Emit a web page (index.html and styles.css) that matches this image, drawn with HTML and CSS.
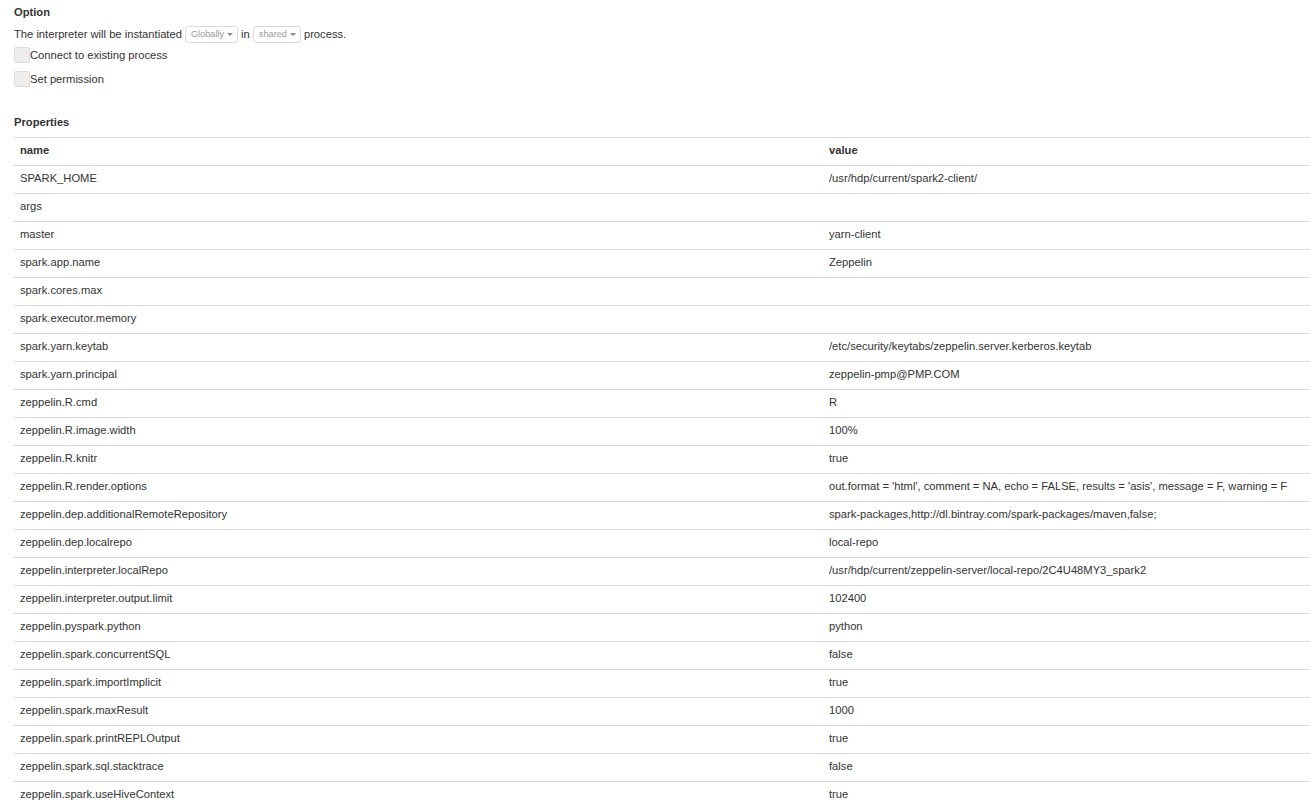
FILE: index.html
```html
<!DOCTYPE html>
<html>
<head>
<meta charset="utf-8">
<link rel="stylesheet" href="styles.css">
</head>
<body>
<div class="page">
  <div class="section-title">Option</div>
  <div class="inst-line">
    <span>The interpreter will be instantiated</span>
    <span class="dd">Globally<span class="caret"></span></span>
    <span>in</span>
    <span class="dd">shared<span class="caret"></span></span>
    <span>process.</span>
  </div>
  <div class="check-row first"><span class="cb"></span><span>Connect to existing process</span></div>
  <div class="check-row"><span class="cb"></span><span>Set permission</span></div>

  <div class="section-title props">Properties</div>
  <table class="props-table">
    <thead>
      <tr><th class="col-name">name</th><th>value</th></tr>
    </thead>
    <tbody>
      <tr><td>SPARK_HOME</td><td>/usr/hdp/current/spark2-client/</td></tr>
      <tr><td>args</td><td></td></tr>
      <tr><td>master</td><td>yarn-client</td></tr>
      <tr><td>spark.app.name</td><td>Zeppelin</td></tr>
      <tr><td>spark.cores.max</td><td></td></tr>
      <tr><td>spark.executor.memory</td><td></td></tr>
      <tr><td>spark.yarn.keytab</td><td>/etc/security/keytabs/zeppelin.server.kerberos.keytab</td></tr>
      <tr><td>spark.yarn.principal</td><td>zeppelin-pmp@PMP.COM</td></tr>
      <tr><td>zeppelin.R.cmd</td><td>R</td></tr>
      <tr><td>zeppelin.R.image.width</td><td>100%</td></tr>
      <tr><td>zeppelin.R.knitr</td><td>true</td></tr>
      <tr><td>zeppelin.R.render.options</td><td>out.format = 'html', comment = NA, echo = FALSE, results = 'asis', message = F, warning = F</td></tr>
      <tr><td>zeppelin.dep.additionalRemoteRepository</td><td>spark-packages,http://dl.bintray.com/spark-packages/maven,false;</td></tr>
      <tr><td>zeppelin.dep.localrepo</td><td>local-repo</td></tr>
      <tr><td>zeppelin.interpreter.localRepo</td><td>/usr/hdp/current/zeppelin-server/local-repo/2C4U48MY3_spark2</td></tr>
      <tr><td>zeppelin.interpreter.output.limit</td><td>102400</td></tr>
      <tr><td>zeppelin.pyspark.python</td><td>python</td></tr>
      <tr><td>zeppelin.spark.concurrentSQL</td><td>false</td></tr>
      <tr><td>zeppelin.spark.importImplicit</td><td>true</td></tr>
      <tr><td>zeppelin.spark.maxResult</td><td>1000</td></tr>
      <tr><td>zeppelin.spark.printREPLOutput</td><td>true</td></tr>
      <tr><td>zeppelin.spark.sql.stacktrace</td><td>false</td></tr>
      <tr><td>zeppelin.spark.useHiveContext</td><td>true</td></tr>
    </tbody>
  </table>
</div>
</body>
</html>
```

FILE: styles.css
```css
html, body {
  margin: 0;
  padding: 0;
  background: #fff;
}

body {
  font-family: "Liberation Sans", Arial, sans-serif;
  font-size: 11.2px;
  color: #333;
  overflow: hidden;
}

.page {
  padding: 0 0 0 14px;
}

.section-title {
  font-weight: bold;
  line-height: 16px;
  margin-top: 4px;
}

.section-title.props {
  margin-top: 27px;
}

.inst-line {
  display: flex;
  align-items: center;
  gap: 3px;
  height: 20px;
  margin-top: 4px;
}

.dd {
  display: inline-flex;
  align-items: center;
  height: 15px;
  padding: 0 4px 0 5px;
  border: 1px solid #ddd;
  border-radius: 3px;
  font-size: 9.2px;
  color: #999;
  background: #fff;
}

.caret {
  display: inline-block;
  width: 0;
  height: 0;
  margin-left: 3px;
  border-left: 3px solid transparent;
  border-right: 3px solid transparent;
  border-top: 3px solid #888;
}

.check-row {
  display: flex;
  align-items: center;
  height: 16px;
  margin-top: 8px;
}

.check-row.first {
  margin-top: 3px;
}

.cb {
  box-sizing: border-box;
  width: 16px;
  height: 16px;
  background: #eee;
  border: 1px solid #ddd;
  border-radius: 2px;
}

.props-table {
  margin-top: 7px;
  width: 100%;
  border-collapse: collapse;
  table-layout: fixed;
}

.props-table th,
.props-table td {
  text-align: left;
  padding: 4px 6px 6px;
  line-height: 17px;
  border-top: 1px solid #ddd;
  white-space: nowrap;
  vertical-align: top;
}

.props-table th {
  font-weight: bold;
}

.col-name {
  width: 797px;
}
```
